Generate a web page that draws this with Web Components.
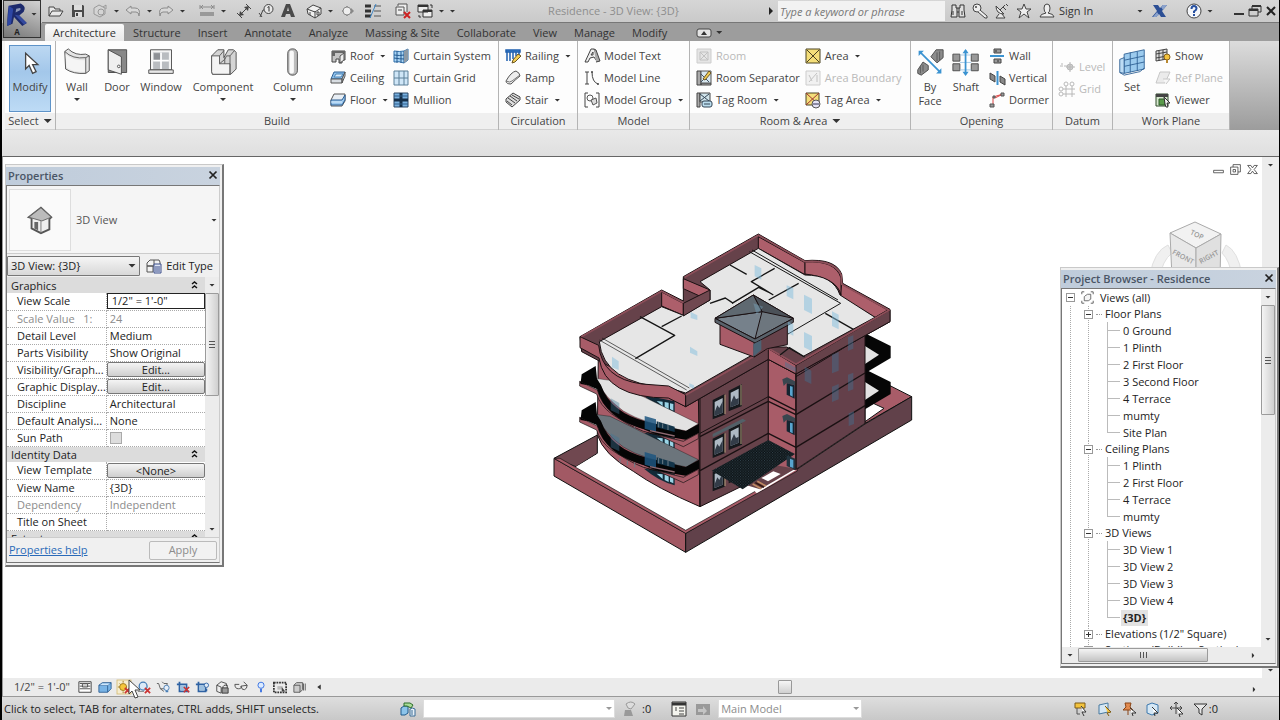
<!DOCTYPE html>
<html lang="en">
<head>
<meta charset="utf-8">
<meta name="viewport" content="width=device-width, initial-scale=1">
<title>Residence - 3D View: {3D}</title>
<style>
  html, body { height: 100%; }
  body {
    margin: 0;
    background: #000;
    color: #444;
    font: 11px/16px "Open Sans", "Noto Sans", sans-serif;
  }
</style>
</head>
<body>
<rv-app></rv-app>

<script>
const ICONS = {
  // quick access
  open: `<path d="M1 13V4h5l1 2h5v2M1 13l3-5h11l-3 5z" fill="#e8e8e8" stroke="#444"/>`,
  save: `<path d="M2 2h11l1 1v11H2z" fill="#4a4a4a"/><path d="M4 2h8v5H4zM5 9h7v5H5z" fill="#ddd"/><path d="M6 10h2v3H6z" fill="#444"/>`,
  sync: `<path d="M2 5l5-3 6 3v6l-5 3-6-3z" fill="#d4d4d4" stroke="#999"/><circle cx="9" cy="9" r="3" fill="none" stroke="#999"/><path d="M11 4l3-2v4" fill="none" stroke="#999"/>`,
  undo: `<path d="M6 3L1 7l5 4V9h5q3 0 3 4 2-8-4-8H6z" fill="#d8d8d8" stroke="#8c8c8c"/>`,
  redo: `<path d="M10 3l5 4-5 4V9H5q-3 0-3 4-2-8 4-8h4z" fill="#d8d8d8" stroke="#8c8c8c"/>`,
  measure: `<path d="M1 4h14M1 2v4M15 2v4M4 2L2 4l2 2M12 2l2 2-2 2" fill="none" stroke="#8c8c8c"/><path d="M1 9h14v4H1z" fill="#999"/>`,
  dim: `<path d="M3 13L13 3M1 10l5 5M10 1l5 5" stroke="#444"/><path d="M3 13l1-5 4 4zM13 3l-1 5-4-4z" fill="#444"/>`,
  tag: `<path d="M2 14l3-7h2M1 10l3 4" fill="none" stroke="#444"/><circle cx="10.500" cy="6" r="4.500" fill="#e8e8e8" stroke="#444"/><path d="M9.500 4.500l1.500-1v5" stroke="#333" fill="none"/>`,
  text: `<path d="M1 14L6 1h4l5 13h-4l-1-3H6l-1 3zM7 8h2L8 4z" fill="#4a4a4a" fill-rule="evenodd"/>`,
  house: `<path d="M1 6l6-4 8 3v6l-6 4-7-4z" fill="#f0f0f0" stroke="#444"/><path d="M9 8v7M1 6l8 3 6-4M4 9v3M11 9h2v3h-2z" fill="none" stroke="#444"/>`,
  section: `<path d="M3 8l5-5 5 5-5 5z" fill="#d8d8d8" stroke="#999"/><circle cx="8" cy="8" r="4" fill="#eee" stroke="#888"/><path d="M12 5l3 3-3 3z" fill="#888"/>`,
  thin: `<path d="M0 3h6M0 8h6M0 13h6" stroke="#333" stroke-width="3"/><path d="M9 3h7M9 8h7M9 13h7" stroke="#555"/><path d="M5 15L11 1" stroke="#3d86c6"/>`,
  hidden: `<path d="M3 3V1h9v8M1 4h8v8H1z" fill="#eee" stroke="#555"/><path d="M3 7h4" stroke="#444"/><path d="M9 9l6 6M15 9l-6 6" stroke="#c22" stroke-width="2"/>`,
  windows: `<path d="M1 2h10v7H1zM6 7h9v7H6z" fill="#eee" stroke="#333"/><path d="M1 3h10M6 8h9" stroke="#333" stroke-width="2"/><path d="M13 2h2v3M2 12v2h2" fill="none" stroke="#333"/>`,
  binoculars: `<path d="M2 7V2h4v3h4V2h4v5l1 7H9V9H7v5H1z" fill="#e0e0e0" stroke="#333"/><path d="M3 8v4M12 8v4M7 5v4M9 5v4" stroke="#333"/>`,
  key: `<circle cx="5" cy="5" r="4" fill="#eee" stroke="#444"/><circle cx="4" cy="4" r="1" fill="#444"/><path d="M8 7l7 6v2h-2L6 9" fill="#eee" stroke="#444"/>`,
  dish: `<path d="M2 3q0 8 8 8zM6 7l5-5M5 11l-3 4h9l-3-4" fill="#e8e8e8" stroke="#444"/><path d="M9 4l3 3M12 1l2 2" stroke="#444"/>`,
  star: `<path d="M8 1l2 5h5l-4 3 2 6-5-4-5 4 2-6-4-3h5z" fill="#eee" stroke="#444"/>`,
  person: `<path d="M5 5q0-4 3-4t3 4-2 5q6 1 6 4H1q0-3 6-4-2-1-2-5z" fill="#eee" stroke="#444"/>`,
  exchange: `<path d="M1 2h5l2 3 3-3h4l-5 6 4 6H9l-2-3-3 3H0l5-6z" fill="#2c4f95"/><path d="M9 4l2-2h4l-4 5zM5 9l2 3-3 2H1z" fill="#8aa2cc"/>`,
  help: `<circle cx="8" cy="8" r="7" fill="#f4f6fa" stroke="#444"/><path d="M5.500 6q0-3 2.500-3t2.500 2.500Q10.500 7 8 8.500V10M8 11v2" stroke="#2750a0" stroke-width="2" fill="none"/>`,
  minimize: `<path d="M3 11h10" stroke="#333" stroke-width="2"/>`,
  restore: `<path d="M5 6V3h9v6h-3M2 6h9v7H2z" fill="none" stroke="#333"/><path d="M5 3h9M2 7h9" stroke="#333" stroke-width="2"/>`,
  close: `<path d="M4 4l8 8M12 4l-8 8" stroke="#222" stroke-width="2"/>`,
  docMin: `<path d="M2 9h12v3H2z" fill="#fff" stroke="#444"/>`,
  docRestore: `<path d="M5 5V2h9v9h-3M2 5h9v9H2z" fill="#fff" stroke="#444"/><path d="M5 8h3v3H5z" fill="#fff" stroke="#444"/>`,
  closebox: `<path d="M2 3h4l2 3 2-3h4l-4 5 4 5h-4l-2-3-2 3H2l4-5z" fill="#fff" stroke="#444"/>`,
  ribbonToggle: `<rect x="1" y="4" width="14" height="8" rx="2" fill="#e4e4e4" stroke="#444"/><path d="M8 6l3 4H5z" fill="#333"/>`,

  // ribbon, small
  roof: `<path d="M2 3h13v9h-3v3H9v-4H6v3H2z" fill="#c4c4c4" stroke="#444"/><path d="M2 3h13v2H5v3H2z" fill="#666"/><path d="M10 8l4-3v7l-4 3z" fill="#eee" stroke="#555"/>`,
  ceiling: `<path d="M4 2h11l-3 7H1z" fill="#8cc0ec" stroke="#2d5f93"/><path d="M6 4h7l-2 3H4z" fill="#d9ecfb" stroke="#4a83b5"/><path d="M1 9h11v4H1zM12 9l3-7v4l-3 7z" fill="#d8dde2" stroke="#555"/>`,
  floor: `<path d="M4 2h11v7l-3 5H1V8z" fill="#e8eef4" stroke="#555"/><path d="M1 8h11l3-5v5l-3 5H1z" fill="#9cc8ee" stroke="#2d5f93"/><path d="M1 10h11" stroke="#d9ecfb"/>`,
  curtain: `<path d="M1 3q6 1 10 0l4-2v11l-4 3q-5-2-10-1z" fill="#a9d4f4" stroke="#2d6da8"/><path d="M1 7q6 1 10 0M1 10q6 1 10 1M4 3v12M8 4v11M11 3v12" stroke="#245b91" fill="none"/><path d="M11 3l4-2v11l-4 3z" fill="#8d99a4"/>`,
  grid: `<path d="M1 1h14v14H1z" fill="#cfe6f7" stroke="#5c8099"/><path d="M6 1v14M11 1v14M1 8h14" stroke="#5c8099"/>`,
  mullion: `<path d="M1 1h14v14H1z" fill="#78b0e0" stroke="#2a4765"/><path d="M8 1v14M1 8h14" stroke="#16304a" stroke-width="3"/><path d="M1 4h14M1 12h14" stroke="#2f5c87"/>`,
  railing: `<path d="M1 2h14v2H1zM2 4v9M5 4v9M8 4v7M11 4v4M14 4v3" stroke="#1e5fae" fill="#4a93de" stroke-width="1.500"/><path d="M8 12l5-6 3 2-6 6-3 1z" fill="#f3cf55" stroke="#6b5520"/>`,
  ramp: `<path d="M1 11q5-9 10-10 4 2 4 5-5 4-9 8-5 0-5-3z" fill="#eee" stroke="#555"/><path d="M1 11q4 2 6 0l8-6" stroke="#777" fill="none"/>`,
  stair: `<path d="M1 7l7-6 7 4v3l-8 7-6-5z" fill="#ddd" stroke="#444"/><path d="M3 6l7 5M5 4l7 5M7 3l7 4M2 9l5 4" stroke="#444"/>`,
  modelText: `<path d="M1 14L7 1h3l4 10-2 1-2-3-4 1-2 4zM7 7h2V4z" fill="#eee" stroke="#444" fill-rule="evenodd"/><path d="M10 1l2 1 4 11-4 1" fill="#aaa" stroke="#444"/>`,
  modelLine: `<path d="M1 2h4M3 2v12M1 14h4M8 2q0 10 6 12" fill="none" stroke="#444"/><circle cx="8" cy="2" r="1" fill="#444"/><circle cx="14" cy="14" r="1" fill="#444"/>`,
  modelGroup: `<path d="M4 1H1v14h3M12 1h3v14h-3" fill="none" stroke="#444"/><circle cx="6" cy="6" r="3" fill="none" stroke="#555"/><path d="M7 8l5-2 1 5-4 2z" fill="#ddd" stroke="#555"/>`,
  room: `<g opacity=".35"><path d="M1 1h14v14H1z" fill="#bbb" stroke="#777"/><path d="M4 4h8v8H4zM4 4l8 8M12 4l-8 8" fill="none" stroke="#555"/></g>`,
  roomSep: `<path d="M1 1h4v14H1zM5 13h10v2H5z" fill="#aaa" stroke="#444"/><path d="M5 1h10v12H5z" fill="#d8e8f0" stroke="#555"/><path d="M5 4l8 8M13 4l-8 8" stroke="#456"/><path d="M7 9l6-8 2 2-6 7z" fill="#f3cf55" stroke="#6b5520"/>`,
  tagRoom: `<path d="M1 1h3v14H1z" fill="#aaa" stroke="#444"/><path d="M4 1h10v9H4z" fill="#cfe3ea" stroke="#444"/><path d="M4 2l9 7M13 2L4 9" stroke="#345"/><rect x="6" y="9" width="10" height="6" rx="2" fill="#bde" stroke="#345"/><path d="M8 12h6" stroke="#345"/>`,
  area: `<path d="M1 1h14v14H1z" fill="#f4de79" stroke="#4a4222"/><path d="M2 2l12 12M14 2L2 14" stroke="#4a4222"/>`,
  areaBound: `<g opacity=".35"><path d="M1 1h14v14H1z" fill="#ddd" stroke="#777"/><path d="M4 12l8-9M4 5l3 6M12 5v7" stroke="#555"/></g>`,
  tagArea: `<path d="M1 1h13v12H1z" fill="#f4de79" stroke="#4a4222"/><path d="M1 1l13 12M14 1L1 13" stroke="#a03030"/><circle cx="11" cy="12" r="4" fill="#e4e2f4" stroke="#555"/><path d="M8 12h6" stroke="#335"/>`,
  wallOpen: `<path d="M5 1h7v4H5zM5 11h7v4H5z" fill="#999" stroke="#444"/><path d="M1 8h14" stroke="#3b93d1" stroke-width="2"/><path d="M7 2v2M9 12v2" stroke="#333"/>`,
  vertical: `<path d="M1 3l5 3v6l-5-3zM11 6l5 3v6l-5-3z" fill="#888" stroke="#444"/><path d="M8.500 1v14" stroke="#3b93d1" stroke-width="2"/>`,
  dormer: `<path d="M4 13V5l10-3-8 4" fill="none" stroke="#d44"/><path d="M1 12h4v3H1zM12 1h3v3h-3zM4 4h2v2H4z" fill="#999" stroke="#555"/>`,
  level: `<g opacity=".4"><path d="M1 7h3M5 7h3M3 4v2" stroke="#555"/><circle cx="11" cy="8" r="3" fill="#888" stroke="#555"/><path d="M11 3v10M7 8h9" stroke="#555"/></g>`,
  gridDatum: `<g opacity=".4" fill="none" stroke="#555"><circle cx="7" cy="3" r="2"/><circle cx="13" cy="3" r="2"/><circle cx="2" cy="8" r="2"/><circle cx="2" cy="13" r="2"/><path d="M7 5v11M13 5v11M4 8h12M4 13h12"/></g>`,
  show: `<path d="M1 3l11-2v10L1 13z" fill="#ddd" stroke="#444"/><path d="M4 3v10M8 2v10M1 6l11-2M1 10l11-2" stroke="#444"/><circle cx="12" cy="9" r="3" fill="#f3c33c" stroke="#86601a"/><path d="M11 12h2v3h-2z" fill="#b88830"/>`,
  refPlane: `<g opacity=".35"><path d="M5 2h10l-5 11H1z" fill="#ccc" stroke="#666"/><path d="M8 9h7l-4 5" fill="#eee" stroke="#666"/></g>`,
  viewer: `<path d="M1 2h12v12H1z" fill="#d7e8cf" stroke="#2f4a2a"/><path d="M1 2h12v3H1z" fill="#444"/><path d="M4 7h6v6H4z" fill="#5a9a4b" stroke="#2f5a2a"/><path d="M9 5l6 6-3 0 1 4-2 0-1-3z" fill="#eee" stroke="#333"/>`,
  editType: `<path d="M1 5l3-3h4v6H1zM8 2h5l1 2v4M1 8h6v6H1z" fill="#f3f3f3" stroke="#555"/><path d="M8 6h7v9H8z" fill="#dfe6f6" stroke="#3c4f8a"/><path d="M9 9h5M9 11h5M9 13h5" stroke="#3c4f8a"/>`,
  views: `<path d="M1 4V1h3M12 1h3v3M15 12v3h-3M4 15H1v-3" fill="none" stroke="#444"/><path d="M5 6l3-2h4v6l-3 2H4V7z" fill="#f4f4f4" stroke="#555"/>`,

  // view control bar
  detail: `<path d="M1 2h14v12H1z" fill="#fff" stroke="#333"/><path d="M2 4h3M2 7h3M11 4h3M11 7h3M2 10h12M5 4h6v4H5z" stroke="#444" fill="#ccc"/>`,
  style: `<path d="M1 6l4-3h10v7l-4 4H1z" fill="#79b4e6" stroke="#2d5f93"/><path d="M1 6h10v8M11 6l4-3" fill="none" stroke="#2d5f93"/><path d="M2 6l3-2h9l-3 2z" fill="#cfe6fa"/>`,
  sun: `<rect x="0" y="0" width="16" height="16" fill="#f6edcf" stroke="#d5bd77"/><circle cx="7" cy="8" r="4" fill="#f6c63a" stroke="#9a7218"/><path d="M7 1v2M1 8h2M3 4l1 1M7 13v2" stroke="#9a7218"/><path d="M9 9l6 6M15 9l-6 6" stroke="#c33" stroke-width="2"/>`,
  shadow: `<circle cx="7" cy="7" r="4.500" fill="#dbe9f7" stroke="#467db5" stroke-width="1.500"/><path d="M1 13h7" stroke="#777"/><path d="M9 9l6 6M15 9l-6 6" stroke="#c33" stroke-width="2"/>`,
  render: `<path d="M1 4h2l2 6h6l2-6H9L7 2M5 10l4 3" fill="none" stroke="#555"/><circle cx="12" cy="9" r="3" fill="#e6eef8" stroke="#467db5"/><path d="M11 13h3" stroke="#467db5" stroke-width="2"/>`,
  crop: `<path d="M4 2v11h11M1 5h11v9" fill="none" stroke="#2e62a3" stroke-width="2"/><path d="M5 6h6v6H5z" fill="#9cc0e0"/><path d="M9 8l6 6M15 8l-6 6" stroke="#c33" stroke-width="2"/>`,
  cropShow: `<path d="M4 2v11h8M1 5h11v9" fill="none" stroke="#2e62a3" stroke-width="2"/><path d="M5 6h6v6H5z" fill="#9cc0e0"/><circle cx="13" cy="6" r="2.500" fill="#dfeaf6" stroke="#2e62a3"/><path d="M12 10h2v3h-2z" fill="#2e62a3"/>`,
  lock: `<path d="M2 6l5-4 6 2v3M2 6v7l5 2M2 6l5 2v7" fill="#eee" stroke="#444"/><path d="M8 9h7v6H8z" fill="#999" stroke="#333"/><path d="M9 9q0-4 5-3v3" fill="none" stroke="#333"/>`,
  glasses: `<path d="M1 5q0 5 4 5t3-3q1 5 4 4t3-5l-4-4M1 5l5 0M8 7l7-1" fill="none" stroke="#444"/>`,
  bulb: `<circle cx="8" cy="6" r="3.500" fill="#dcebff" stroke="#2e6ae0"/><path d="M7 10h2v4H7z" fill="#2e6ae0"/>`,
  temp: `<path d="M1 3h14v11H1z" fill="none" stroke="#333" stroke-width="2" stroke-dasharray="2 1"/><path d="M5 7h6v4H5z" fill="#bbb"/><path d="M10 8l4 5-4 0z" fill="#444"/>`,
  analytic: `<path d="M1 6l3-3h7v8l-3 3H1z" fill="#ccc" stroke="#555"/><path d="M1 6h7v8M12 4v8M14 4v8" fill="none" stroke="#555"/>`,
  left: `<path d="M10 5v6L6 8z" fill="#333"/>`,

  // status bar
  workset: `<path d="M1 7l3-2h4v7l-3 2H1z" fill="#8cc4ea" stroke="#1f5a8c"/><path d="M4 5V2h6l3 2-2 3-4-2z" fill="#a9dc98" stroke="#2d6d2a"/><path d="M10 8q2-2 5 0v7h-5zM12 9v5" fill="#e7f0f7" stroke="#3a6c96"/>`,
  filterGray: `<path d="M4 3q5-4 9 0l-4 5-3-1z" fill="#ddd" stroke="#999"/><path d="M3 9h6l2 6H2z" fill="#999"/>`,
  options: `<path d="M1 1h14v14H1z" fill="#f4f4ee" stroke="#333"/><path d="M1 3h14" stroke="#333" stroke-width="3"/><path d="M4 7h2M4 9h2M8 7h5M8 10h5M8 13h5" stroke="#444" fill="none"/>`,
  optionAdd: `<path d="M1 3h14v11H1z" fill="#999"/><path d="M3 8h5v-3l4 5-4 4v-3H3z" fill="#c4c4c4"/>`,
  selLink: `<path d="M2 2h10v5H2z" fill="#f3c33c" stroke="#7c5b16"/><path d="M8 5l5 6H9l2 4" fill="#fff" stroke="#333"/><path d="M4 7v6h3" stroke="#555" fill="none"/>`,
  selUnder: `<path d="M2 13V4l9-2v9z" fill="#d5e7f4" stroke="#47799f"/><path d="M8 5l6 6-4 1 2 3" fill="#f3c33c" stroke="#7c5b16"/>`,
  selPin: `<path d="M4 2h6l-1 4 3 3H2l3-3zM7 9v5" fill="#e28a4e" stroke="#8a4416"/><path d="M9 7l6 5-4 0 1 3" fill="#fff" stroke="#333"/>`,
  selFace: `<path d="M2 4l5-2 6 2v8l-6 2-5-2z" fill="#d5e7f4" stroke="#3c78ae"/><path d="M7 6l6 6-4 0 1 3" fill="#fff" stroke="#333"/>`,
  drag: `<path d="M7 1v12M1 7h12M5 3l2-2 2 2M3 5L1 7l2 2M11 5l2 2-2 2" stroke="#444" fill="none"/><path d="M8 7l6 6-4 0 1 3" fill="#fff" stroke="#333"/>`,
  filter: `<path d="M1 3h13L9 8v6l-3-2V8z" fill="#e8e8e8" stroke="#333"/>`,

  // ribbon, large (32 x 32 grid)
  modify: `<path d="M11 6v18l4-4 4 9 4-2-4-8h6z" fill="#fff" stroke="#444" stroke-width="1.500"/>`,
  wall: `<path d="M2 4l4-3q8 8 20 6l4 2v17l-4 3Q12 30 3 24z" fill="#e4e4e4" stroke="#444"/><path d="M2 4q9 9 24 7l4-2M26 11v18" fill="none" stroke="#555"/><path d="M3 7q9 8 22 7v13Q11 28 4 22z" fill="#f5f5f5"/>`,
  door: `<path d="M6 2h21v26H6z" fill="#888" stroke="#444"/><path d="M6 2l15 8v20L6 25z" fill="#efefef" stroke="#444"/><circle cx="18" cy="21" r="1.500" fill="#fff" stroke="#444"/>`,
  window: `<path d="M4 2h24v23H4z" fill="#f4f4f4" stroke="#444"/><path d="M7 5h18v19H7z" fill="#b9bcc0"/><path d="M8 6h8v8H8z" fill="#8e9196"/><path d="M16 5v19M7 14.500h18" stroke="#fff" stroke-width="2"/><path d="M2 25h28v4H2z" fill="#e8e8e8" stroke="#444"/>`,
  component: `<path d="M3 9l7-7h7v9l5-9h6l3 3v19l-6 6H4l-1-3z" fill="#d4d4d4" stroke="#444"/><path d="M3 9h9v9h12v12H4l-1-3z" fill="#f4f4f4" stroke="#555"/><path d="M12 9l5-6M12 18l6-5M18 13v-2M24 30V9l5-6M24 9h-4l-2 4v5" fill="none" stroke="#555"/>`,
  column: `<rect x="10" y="1" width="11" height="30" rx="5" fill="#bdbdbd" stroke="#444"/><rect x="12" y="3" width="5" height="26" rx="2" fill="#fafafa"/>`,
  byFace: `<path d="M17 10l6-8h8v9l-7 6zM2 25l6-9 6 4v5l-8 6-4-2z" fill="#8c8c8c" stroke="#444"/><path d="M24 5v10M27 4v10M5 21v8M8 19v8" stroke="#555"/><path d="M5 5l22 22" stroke="#3b93d1" stroke-width="2"/><path d="M3 3h6l-6 6zM29 29h-6l6-6z" fill="#3b93d1"/>`,
  shaft: `<path d="M1 7h8v8H1zM22 7h8v8h-8zM1 18h8v8H1zM22 18h8v8h-8z" fill="#999" stroke="#444"/><path d="M9 16.500h13M9 8h13M9 25h13" stroke="#9ec5e2"/><path d="M15.500 3v27" stroke="#3b93d1" stroke-width="2"/><path d="M12 6l3.500-5L19 6zM12 27l3.500 5 3.500-5z" fill="#3b93d1"/>`,
  set: `<path d="M7 7l23-5v22L7 29z" fill="#9ccbee" stroke="#2d5f93"/><path d="M14 5v23M22 4v22M7 14l23-5M7 21l23-5" stroke="#2d5f93"/><path d="M2 13l5-2v18l-5-1z" fill="#bddcf4" stroke="#2d5f93"/><path d="M2 28l5 3 18-4 5-4" fill="none" stroke="#2d5f93"/>`,
  homeView: `<path d="M4 13L17 3l11 10-2 2v11l-9 4L7 25V14z" fill="#eee" stroke="#555" stroke-width="2"/><path d="M4 13L17 3l11 10-10 4z" fill="#bbb" stroke="#666"/><path d="M17 17v13" stroke="#777"/><path d="M10 18h4v9l-4-2z" fill="#666"/>`,
  logo: `<path d="M5 5l16-3q8 4 4 11l-6 5 10 10-6 4-11-12-2 9-7 3q0-16 2-27z" fill="#1c2a6c"/><path d="M15 9l5-1q2 1 0 3l-6 3z" fill="#8c98b8"/><path d="M5 5l6 4-3 20-5 3z" fill="#2d46a4"/><path d="M13 17l6 1 10 10-4 2z" fill="#33499e"/>`
};

const BIG = ["modify", "wall", "door", "window", "component", "column", "byFace", "shaft", "set", "homeView", "logo"];

const BASE = `
  *, *::before, *::after { box-sizing: border-box; }
  button, input, select { font: inherit; color: inherit; }
  button { margin: 0; padding: 0; border: 0; background: none; }
  .caret {
    display: inline-block;
    flex: none;
    width: 6px;
    height: 3px;
    background: #333;
    clip-path: polygon(0 0, 100% 0, 50% 100%);
  }
`;

class RvElement extends HTMLElement {
  constructor() {
    super();
    this.attachShadow({ mode: "open" });
  }

  getStyles() {
    return "";
  }

  getMarkup() {
    return "<slot></slot>";
  }

  connectedCallback() {
    if (this.shadowRoot.childNodes.length) return;
    const template = document.createElement("template");
    template.innerHTML = `<style>${BASE}${this.getStyles()}</style>${this.getMarkup()}`;
    this.shadowRoot.appendChild(template.content.cloneNode(true));
  }
}

class RvIcon extends RvElement {
  getStyles() {
    return `
      :host { display: inline-block; flex: none; width: var(--icon, 16px); height: var(--icon, 16px); }
      svg { display: block; width: 100%; height: 100%; overflow: visible; }
    `;
  }

  getMarkup() {
    const name = this.getAttribute("name");
    const box = BIG.includes(name) ? 32 : 16;
    return `<svg viewBox="0 0 ${box} ${box}" aria-hidden="true">${ICONS[name] || ""}</svg>`;
  }
}
customElements.define("rv-icon", RvIcon);

/* ---------- header: quick access, search, tabs ---------- */

class RvHeader extends RvElement {
  getStyles() {
    return `
      :host {
        display: grid;
        grid-template: 23px 18px / 40px 1fr;
        background: linear-gradient(#d6d6d6, #c9c9c9 23px, #9d9d9d 23px);
      }
      .app {
        grid-row: 1 / 3;
        display: grid;
        grid-template: 26px 9px / 26px 8px;
        place-items: center;
        align-self: start;
        width: 38px;
        height: 38px;
        margin-left: 1px;
        border: 1px solid #333;
        background: linear-gradient(200deg, #d2d2d2, #777);
        --icon: 24px;
      }
      .app small { font-size: 8px; line-height: 8px; font-weight: 700; color: #222; }
      .bar { display: flex; align-items: center; border-bottom: 1px solid #777; min-width: 0; }
      .tools { display: flex; align-items: center; padding-left: 3px; }
      .tools button, .help button { display: flex; justify-content: center; width: 22px; }
      .tools .drop { width: 11px; }
      .gap { width: 4px; }
      .gap.wide { width: 8px; }
      h1 { flex: 1; margin: 0; font-size: 11px; font-weight: 400; color: #8e8e8e; text-align: center; }
      .search { display: flex; align-items: center; gap: 5px; flex: none; }
      .search .arrow { width: 4px; height: 8px; background: #222; clip-path: polygon(0 0, 100% 50%, 0 100%); }
      .search input {
        width: 167px;
        height: 20px;
        padding: 0 2px;
        border: 0;
        background: #f2f2f2;
        font-style: italic;
      }
      .search input::placeholder { color: #777; opacity: 1; }
      .help { display: flex; align-items: center; flex: none; padding-left: 2px; }
      .help .sign { justify-content: flex-start; gap: 4px; width: 100px; padding-left: 4px; color: #333; }
      .help .drop { width: 10px; }
      .help .win { width: 16px; }
      nav { display: flex; align-items: flex-end; gap: 1px; padding-left: 3px; color: #333; }
      nav button { height: 17px; padding: 0 8px; line-height: 16px; }
      nav button[aria-selected="true"] { background: linear-gradient(#fafafa, #e9e9e9); border-radius: 2px 2px 0 0; }
      nav .toggle { display: flex; align-items: center; gap: 4px; padding: 0 20px; }
    `;
  }

  getMarkup() {
    const tool = (name, label) => `<button aria-label="${label}"><rv-icon name="${name}"></rv-icon></button>`;
    const drop = `<button class="drop" aria-label="More"><span class="caret"></span></button>`;
    const gap = `<span class="gap"></span>`;
    const wide = `<span class="gap wide"></span>`;
    const tabs = ["Architecture", "Structure", "Insert", "Annotate", "Analyze", "Massing &amp; Site",
      "Collaborate", "View", "Manage", "Modify"];
    return `
      <button class="app" aria-label="Application menu">
        <rv-icon name="logo"></rv-icon><span class="caret"></span><small>A</small>
      </button>
      <div class="bar">
        <div class="tools">
          ${tool("open", "Open")}${tool("save", "Save")}${tool("sync", "Synchronize")}${drop}
          ${tool("undo", "Undo")}${drop}${tool("redo", "Redo")}${drop}${wide}
          ${tool("measure", "Measure")}${drop}${gap}${tool("dim", "Aligned dimension")}${tool("tag", "Tag")}
          ${tool("text", "Text")}${gap}${tool("house", "Default 3D view")}${drop}${tool("section", "Section")}
          ${gap}${tool("thin", "Thin lines")}${wide}${tool("hidden", "Close hidden windows")}
          ${tool("windows", "Switch windows")}${drop}${drop}
        </div>
        <h1>Residence - 3D View: {3D}</h1>
        <div class="search">
          <span class="arrow"></span>
          <input type="search" aria-label="Search" placeholder="Type a keyword or phrase">
        </div>
        <div class="help">
          ${tool("binoculars", "Find")}${tool("key", "Subscription")}${tool("dish", "Communication")}${tool("star", "Favorites")}
          <button class="sign"><rv-icon name="person"></rv-icon>Sign In</button>
          ${drop}${gap}${tool("exchange", "Exchange apps")}${wide}${gap}${tool("help", "Help")}${drop}
          ${wide}${wide}
          <button class="win" aria-label="Minimize"><rv-icon name="minimize"></rv-icon></button>
          <button class="win" aria-label="Restore"><rv-icon name="restore"></rv-icon></button>
          <button class="win" aria-label="Close"><rv-icon name="close"></rv-icon></button>
        </div>
      </div>
      <nav role="tablist">
        ${tabs.map((t, i) => `<button role="tab" aria-selected="${i === 0}">${t}</button>`).join("")}
        <button class="toggle" aria-label="Minimize ribbon"><rv-icon name="ribbonToggle"></rv-icon><span class="caret"></span></button>
      </nav>
    `;
  }
}
customElements.define("rv-header", RvHeader);

/* ---------- ribbon ---------- */

class RvBigButton extends RvElement {
  getStyles() {
    return `
      :host { display: block; }
      button {
        display: flex;
        flex-direction: column;
        align-items: center;
        gap: 4px;
        width: 100%;
        height: 67px;
        padding-top: 2px;
        border: 1px solid transparent;
        line-height: 14px;
        --icon: 28px;
      }
      :host([active]) button { border-color: #5e93c8; background: linear-gradient(#bcd8f2, #a3c7ea 40%, #bddbf5); }
    `;
  }

  getMarkup() {
    return `
      <button>
        <rv-icon name="${this.getAttribute("icon")}"></rv-icon>
        <span class="label"><slot></slot></span>
        ${this.hasAttribute("drop") ? `<span class="caret"></span>` : ""}
      </button>
    `;
  }
}
customElements.define("rv-big-button", RvBigButton);

class RvTool extends RvElement {
  getStyles() {
    return `
      :host { display: block; }
      button { display: flex; align-items: center; gap: 4px; height: 22px; white-space: nowrap; }
      .caret { margin-left: 2px; }
      :host([disabled]) { color: #b9b9b9; }
    `;
  }

  getMarkup() {
    return `
      <button ${this.hasAttribute("disabled") ? "disabled" : ""}>
        <rv-icon name="${this.getAttribute("icon")}"></rv-icon>
        <slot></slot>
        ${this.hasAttribute("drop") ? `<span class="caret"></span>` : ""}
      </button>
    `;
  }
}
customElements.define("rv-tool", RvTool);

class RvPanel extends RvElement {
  getStyles() {
    return `
      :host {
        display: grid;
        grid-template-rows: 1fr 17px;
        min-width: 0;
        border-right: 1px solid #b4b4b4;
        background: #fdfdfd;
      }
      .tools { display: flex; min-width: 0; padding: 4px 1px 0; }
      footer {
        display: flex;
        align-items: center;
        justify-content: center;
        gap: 5px;
        background: #efefef;
        border-bottom: 1px solid #d2d2d2;
      }
      footer .caret { width: 8px; height: 4px; }
    `;
  }

  getMarkup() {
    return `
      <div class="tools"><slot></slot></div>
      <footer>${this.getAttribute("label")}${this.hasAttribute("drop") ? `<span class="caret"></span>` : ""}</footer>
    `;
  }
}
customElements.define("rv-panel", RvPanel);

class RvRibbon extends RvElement {
  getStyles() {
    return `
      :host {
        display: grid;
        grid-template-columns: 51fr 443fr 79fr 112fr 221fr 142fr 60fr 117fr 49fr;
        height: 89px;
        padding-left: 3px;
        background: #f4f4f4;
      }
      .fill { background: linear-gradient(#dcdcdc, #9c9c9c); }
      .col { display: flex; flex-direction: column; padding-left: 5px; }
      .col.mid { justify-content: center; padding-bottom: 3px; }
      .w36 { width: 36px; }
      .w40 { width: 40px; }
      .w48 { width: 48px; }
      .w64 { width: 64px; }
      .w76 { width: 76px; }
      rv-big-button { flex: none; }
      [label="Select"] rv-big-button { width: 42px; margin: 0 3px; }
    `;
  }

  getMarkup() {
    return `
      <rv-panel label="Select" drop>
        <rv-big-button icon="modify" active>Modify</rv-big-button>
      </rv-panel>
      <rv-panel label="Build">
        <rv-big-button class="w40" icon="wall" drop>Wall</rv-big-button>
        <rv-big-button class="w40" icon="door">Door</rv-big-button>
        <rv-big-button class="w48" icon="window">Window</rv-big-button>
        <rv-big-button class="w76" icon="component" drop>Component</rv-big-button>
        <rv-big-button class="w64" icon="column" drop>Column</rv-big-button>
        <div class="col">
          <rv-tool icon="roof" drop>Roof</rv-tool>
          <rv-tool icon="ceiling">Ceiling</rv-tool>
          <rv-tool icon="floor" drop>Floor</rv-tool>
        </div>
        <div class="col">
          <rv-tool icon="curtain">Curtain System</rv-tool>
          <rv-tool icon="grid">Curtain Grid</rv-tool>
          <rv-tool icon="mullion">Mullion</rv-tool>
        </div>
      </rv-panel>
      <rv-panel label="Circulation">
        <div class="col">
          <rv-tool icon="railing" drop>Railing</rv-tool>
          <rv-tool icon="ramp">Ramp</rv-tool>
          <rv-tool icon="stair" drop>Stair</rv-tool>
        </div>
      </rv-panel>
      <rv-panel label="Model">
        <div class="col">
          <rv-tool icon="modelText">Model Text</rv-tool>
          <rv-tool icon="modelLine">Model Line</rv-tool>
          <rv-tool icon="modelGroup" drop>Model Group</rv-tool>
        </div>
      </rv-panel>
      <rv-panel label="Room &amp; Area" drop>
        <div class="col">
          <rv-tool icon="room" disabled>Room</rv-tool>
          <rv-tool icon="roomSep">Room Separator</rv-tool>
          <rv-tool icon="tagRoom" drop>Tag Room</rv-tool>
        </div>
        <div class="col">
          <rv-tool icon="area" drop>Area</rv-tool>
          <rv-tool icon="areaBound" disabled>Area Boundary</rv-tool>
          <rv-tool icon="tagArea" drop>Tag Area</rv-tool>
        </div>
      </rv-panel>
      <rv-panel label="Opening">
        <rv-big-button class="w36" icon="byFace">By<br>Face</rv-big-button>
        <rv-big-button class="w36" icon="shaft">Shaft</rv-big-button>
        <div class="col">
          <rv-tool icon="wallOpen">Wall</rv-tool>
          <rv-tool icon="vertical">Vertical</rv-tool>
          <rv-tool icon="dormer">Dormer</rv-tool>
        </div>
      </rv-panel>
      <rv-panel label="Datum">
        <div class="col mid">
          <rv-tool icon="level" disabled>Level</rv-tool>
          <rv-tool icon="gridDatum" disabled>Grid</rv-tool>
        </div>
      </rv-panel>
      <rv-panel label="Work Plane">
        <rv-big-button class="w36" icon="set">Set</rv-big-button>
        <div class="col">
          <rv-tool icon="show">Show</rv-tool>
          <rv-tool icon="refPlane" disabled>Ref Plane</rv-tool>
          <rv-tool icon="viewer">Viewer</rv-tool>
        </div>
      </rv-panel>
      <div class="fill"></div>
    `;
  }
}
customElements.define("rv-ribbon", RvRibbon);

/* ---------- shared palette parts ---------- */

class RvScrollbar extends RvElement {
  getStyles() {
    return `
      :host { display: flex; flex-direction: column; align-items: center; width: 14px; background: #ececec; }
      .end { display: grid; place-items: center; flex: none; width: 100%; height: 16px; }
      .end:first-child .caret { transform: rotate(180deg); }
      .track { flex: 1; width: 100%; min-height: 0; }
      .thumb {
        display: grid;
        place-items: center;
        width: 100%;
        height: var(--thumb, 0);
        border: 1px solid #9b9b9b;
        border-radius: 1px;
        background: linear-gradient(90deg, #f4f4f4, #cfcfcf);
      }
      .thumb::after { content: ""; width: 6px; height: 7px; background: repeating-linear-gradient(#555 0 1px, transparent 1px 3px); }
      :host([plain]) .thumb { display: none; }
      :host([horizontal]) { flex-direction: row; width: auto; height: 16px; }
      :host([horizontal]) .end { width: 16px; }
      :host([horizontal]) .end:first-child .caret { transform: rotate(90deg); }
      :host([horizontal]) .end:last-child .caret { transform: rotate(-90deg); }
      :host([horizontal]) .track { height: 100%; }
      :host([horizontal]) .thumb { width: var(--thumb); height: 14px; margin-top: 1px; background: linear-gradient(#f4f4f4, #c4c4c4); }
      :host([horizontal]) .thumb::after { width: 7px; height: 6px; background: repeating-linear-gradient(90deg, #555 0 1px, transparent 1px 3px); }
    `;
  }

  getMarkup() {
    return `
      <span class="end"><span class="caret"></span></span>
      <span class="track"><span class="thumb"></span></span>
      <span class="end"><span class="caret"></span></span>
    `;
  }
}
customElements.define("rv-scrollbar", RvScrollbar);

class RvPalette extends RvElement {
  getStyles() {
    return `
      :host {
        display: flex;
        flex-direction: column;
        padding: 2px var(--edge, 2px) 2px 0;
        border: 1px solid #c9c9c9;
        border-right: 2px solid #777;
        border-bottom: 2px solid #777;
        background: #f0f0f0;
      }
      header {
        display: flex;
        align-items: center;
        justify-content: space-between;
        flex: none;
        height: 18px;
        padding-left: 2px;
        background: linear-gradient(90deg, #bfccdb, #c9d3df);
        color: #4a5566;
        font-weight: 600;
      }
      header button { width: 14px; height: 16px; --icon: 14px; }
      .body { display: flex; flex-direction: column; flex: 1; min-height: 0; border: 1px solid #777; border-right-color: #ccc; }
    `;
  }

  getMarkup() {
    return `
      <header>${this.getAttribute("label")}<button aria-label="Close"><rv-icon name="close"></rv-icon></button></header>
      <div class="body"><slot></slot></div>
    `;
  }
}
customElements.define("rv-palette", RvPalette);

/* ---------- properties ---------- */

class RvProperties extends RvElement {
  getStyles() {
    return `
      :host { display: flex; flex-direction: column; flex: 1; min-height: 0; color: #222; }
      .type { display: flex; align-items: center; height: 68px; padding: 3px 2px 2px; border-bottom: 1px solid #ccc; background: #f5f5f5; }
      .preview { display: grid; place-items: center; width: 62px; height: 62px; border: 1px solid #ddd; background: #fafafa; --icon: 30px; }
      .type span:nth-child(2) { flex: 1; padding-left: 5px; color: #555; }
      .pick { display: flex; align-items: center; justify-content: space-between; height: 23px; }
      .combo { display: grid; align-items: center; width: 133px; }
      .combo > * { grid-area: 1 / 1; }
      .combo .caret { justify-self: end; margin-right: 4px; width: 8px; height: 4px; }
      select { appearance: none; height: 20px; padding: 0 3px; border: 1px solid #777; border-radius: 1px; background: linear-gradient(#f5f5f5, #d8d8d8); }
      .edit { display: flex; align-items: center; gap: 4px; padding-right: 6px; }
      .rows { display: flex; flex: 1; min-height: 0; overflow: hidden; }
      table { flex: 1; align-self: flex-start; table-layout: fixed; border-collapse: collapse; background: #fff; }
      th, td { height: 17px; padding: 0; font-weight: 400; text-align: left; line-height: 16px; white-space: nowrap; overflow: hidden; text-overflow: ellipsis; border-bottom: 1px dotted #aaa; }
      tbody th { padding-left: 10px; width: 50%; border-right: 1px dotted #aaa; }
      td { padding-left: 3px; }
      .group th { height: 16px; line-height: 15px; padding-left: 4px; border: 0; background: #dcdcdc; }
      .group div { display: flex; justify-content: space-between; align-items: center; padding-right: 7px; }
      .chevron { width: 7px; height: 8px; stroke: #111; stroke-width: 1.500; fill: none; }
      .dim { color: #8c8c8c; }
      td input[type="text"] { width: 100%; height: 16px; padding: 0 4px; border: 1px solid #222; background: #fff; display: block; }
      td:has(input[type="text"]), td:has(button) { padding: 0; }
      td button { display: block; width: 100%; height: 15px; line-height: 13px; border: 1px solid #777; border-radius: 2px; background: linear-gradient(#f4f4f4, #cfcfcf); }
      td input[type="checkbox"] { appearance: none; display: block; width: 12px; height: 12px; margin: 0; border: 1px solid #aaa; background: #ddd; }
      rv-scrollbar { --thumb: 103px; }
      footer { display: flex; align-items: center; justify-content: space-between; height: 25px; padding: 0 2px; border-top: 1px solid #ccc; }
      a { color: #2a6ab8; }
      footer button { width: 68px; height: 19px; border: 1px solid #bbb; border-radius: 2px; background: #f2f2f2; color: #8c8c8c; }
    `;
  }

  getMarkup() {
    const chevron = `<svg class="chevron" viewBox="0 0 7 8"><path d="M1 3l2.500-2L6 3M1 7l2.500-2L6 7"/></svg>`;
    const group = (name) => `<tr class="group"><th colspan="2"><div>${name}${chevron}</div></th></tr>`;
    const row = (name, value, cls = "") => `<tr class="${cls}"><th scope="row">${name}</th><td>${value}</td></tr>`;
    return `
      <div class="type">
        <span class="preview"><rv-icon name="homeView"></rv-icon></span>
        <span>3D View</span>
        <span class="caret"></span>
      </div>
      <div class="pick">
        <div class="combo">
          <select aria-label="Instance"><option>3D View: {3D}</option></select>
          <span class="caret"></span>
        </div>
        <button class="edit"><rv-icon name="editType"></rv-icon>Edit Type</button>
      </div>
      <div class="rows">
        <table>
          <tbody>
            ${group("Graphics")}
            ${row("View Scale", `<input type="text" aria-label="View Scale" value="1/2&quot; = 1'-0&quot;">`)}
            ${row("Scale Value &nbsp; 1:", "24", "dim")}
            ${row("Detail Level", "Medium")}
            ${row("Parts Visibility", "Show Original")}
            ${row("Visibility/Graph...", "<button>Edit...</button>")}
            ${row("Graphic Display...", "<button>Edit...</button>")}
            ${row("Discipline", "Architectural")}
            ${row("Default Analysi...", "None")}
            ${row("Sun Path", `<input type="checkbox" aria-label="Sun Path">`)}
            ${group("Identity Data")}
            ${row("View Template", "<button>&lt;None&gt;</button>")}
            ${row("View Name", "{3D}")}
            ${row("Dependency", "Independent", "dim")}
            ${row("Title on Sheet", "")}
            ${group("Extents")}
          </tbody>
        </table>
        <rv-scrollbar></rv-scrollbar>
      </div>
      <footer><a href="#help">Properties help</a><button disabled>Apply</button></footer>
    `;
  }
}
customElements.define("rv-properties", RvProperties);

/* ---------- project browser ---------- */

class RvBrowser extends RvElement {
  getStyles() {
    return `
      :host { display: flex; flex-direction: column; flex: 1; min-height: 0; background: #fff; color: #222; }
      .view { display: flex; flex: 1; min-height: 0; overflow: hidden; }
      ul { margin: 0; padding: 0; list-style: none; }
      .tree { flex: 1; min-width: 0; white-space: nowrap; }
      .root { display: flex; align-items: center; gap: 6px; height: 17px; padding-left: 4px; --icon: 13px; }
      .groups { margin-left: 8px; background: repeating-linear-gradient(#aaa 0 1px, #fff 1px 2px) 0 0 / 1px 100% no-repeat; }
      .groups > li { background: repeating-linear-gradient(#aaa 0 1px, #fff 1px 2px) 18px 0 / 1px 100% no-repeat; }
      .group { display: flex; align-items: center; height: 16px; padding-left: 14px; }
      .group::after { order: 1; content: ""; width: 6px; margin: 0 3px; border-top: 1px dotted #999; }
      .group span { order: 2; }
      .box {
        flex: none;
        width: 9px;
        height: 9px;
        border: 1px solid #999;
        background: linear-gradient(#333, #333) center / 5px 1px no-repeat #fff;
      }
      .box.plus { background: linear-gradient(#333, #333) center / 5px 1px no-repeat, linear-gradient(#333, #333) center / 1px 5px no-repeat #fff; }
      .leaves { margin-left: 37px; background: linear-gradient(#bbb, #bbb) 0 0 / 1px calc(100% - 8px) no-repeat; }
      .leaves li { display: flex; align-items: center; gap: 1px; height: 17px; }
      .leaves li::before { content: ""; width: 13px; border-top: 1px solid #bbb; }
      .leaves span { padding: 0 2px; line-height: 16px; }
      .leaves .current { background: #e2e2e2; font-weight: 700; }
      .view rv-scrollbar { --thumb: 110px; }
      rv-scrollbar[horizontal] { --thumb: 130px; flex: none; margin-right: 14px; }
      .foot { background: #ececec; }
    `;
  }

  getMarkup() {
    const group = (name, leaves = []) => `
      <li>
        <div class="group"><i class="box ${leaves.length ? "" : "plus"}"></i><span>${name}</span></div>
        <ul class="leaves">${leaves.map((l) => `<li><span class="${l === "{3D}" ? "current" : ""}">${l}</span></li>`).join("")}</ul>
      </li>`;
    return `
      <div class="view">
        <div class="tree">
          <div class="root"><i class="box"></i><rv-icon name="views"></rv-icon>Views (all)</div>
          <ul class="groups">
            ${group("Floor Plans", ["0 Ground", "1 Plinth", "2 First Floor", "3 Second Floor", "4 Terrace", "mumty", "Site Plan"])}
            ${group("Ceiling Plans", ["1 Plinth", "2 First Floor", "4 Terrace", "mumty"])}
            ${group("3D Views", ["3D View 1", "3D View 2", "3D View 3", "3D View 4", "{3D}"])}
            ${group("Elevations (1/2\" Square)")}
            ${group("Sections (Building Section)")}
          </ul>
        </div>
        <rv-scrollbar></rv-scrollbar>
      </div>
      <div class="foot"><rv-scrollbar horizontal></rv-scrollbar></div>
    `;
  }
}
customElements.define("rv-browser", RvBrowser);

/* ---------- drawing area ---------- */

class RvModel extends RvElement {
  getStyles() {
    return `
      :host { display: block; width: 390px; height: 340px; }
      svg { display: block; width: 100%; height: 100%; }
    `;
  }

  getMarkup() {
    // one storey of openings, repeated down the facade
    const pair = `
      <path d="M518 540l36-18v62l-36 14zM566 512l40-20v66l-40 16z" fill="#15181c"/>
      <path d="M524 546l24-12v44l-24 10zM572 518l24-12v46l-24 10z" fill="#aeb9c4"/>
      <path d="M524 576l8-20 6 8 10-20v34l-24 10zM572 550l10-24 6 12 8-4v18l-24 10z" fill="#333c48"/>
      <path d="M555 524v58M603 494v62" stroke="#b7a07c" stroke-width="3"/>`;
    const side = `
      <path d="M727 478l14-6 24 12v12l-26-6-8 8z" fill="#39464f"/>
      <path d="M740 490l24 6v40l-24-12z" fill="#142430"/>
      <path d="M750 498l8 2v30l-8-4z" fill="#58a5cf"/>`;
    const bay = `
      <path d="M312 528q40 4 92 16v34q-50-14-92-50z" fill="#122a38"/>
      <path d="M350 543l18 2v14zM374 546l12 2v20l-12-6zM390 550l10 2v20l-10-5z" fill="#9ad4e6"/>`;
    const balcony = (deck) => `
      <path d="M165 475l45 6 265 130-35 22q-130-22-190-60-60-45-70-80z" fill="${deck}" stroke="#000"/>
      <path d="M125 463l42-25 4 38 12 20q30 84 140 110l114 27 40-22v28l-40 20-107-18Q190 590 174 506l-52-18z" fill="#050505"/>
      <path d="M119 484l53 26q20 76 138 124l120 30 45-24v16l-45 24-120-54Q190 590 170 522l-51-24z" fill="#a85c68" stroke="#111" stroke-width="2"/>
      <path d="M119 484l53 24q20 86 148 122l110 26v-12l-100-22q-130-36-148-120l-60-10z" fill="#050505"/>
      <path d="M314 588l34 10v38l-34-10z" fill="#1d5680" opacity=".85"/>
      <path d="M350 604l54 16v16l-54-14z" fill="#123449"/>
      <path d="M356 606v16M368 610v14M384 614v16M240 606v14M262 614v14M284 620v14" stroke="#6c7d88" stroke-width="3"/>
      <path d="M330 632l74 16" stroke="#8e6a72" stroke-width="4"/>`;
    return `
      <svg viewBox="0 0 1170 1020" stroke-linejoin="round" role="img" aria-label="Residence model">
        <defs>
          <pattern id="mesh" width="8" height="8" patternUnits="userSpaceOnUse">
            <path d="M0 0h8v8H0z" fill="#0a1013"/><path d="M0 0h3v3H0zM4 4h3v3H4z" fill="#33444c"/>
          </pattern>
        </defs>

        <!-- compound wall -->
        <g stroke="#111" stroke-width="3">
          <path d="M42 715L172 645v55L108 740z" fill="#704850"/>
          <path d="M975 540l75-43 65 33-140 80z" fill="#a85c68"/>
          <path d="M975 562l25-12 32 15-57 40z" fill="#fff"/>
          <path d="M108 740l68-40 304 155 300-115-343 190z" fill="#fff" stroke="none"/>
          <path d="M42 715L437 940v57L42 768z" fill="#a25964"/>
          <path d="M437 940l331-190 207-138 140-82v70L437 997z" fill="#61414a"/>
          <path d="M42 715l18 0 377 216 335-188 0 10-335 187z" fill="#a85c68" stroke-width="2"/>
        </g>

        <!-- rear balconies -->
        <g>
          <path d="M975 340l77 38v36l-77 46z" fill="#060606"/>
          <path d="M975 378l42 26-42 28z" fill="#e3e3e3"/>
          <path d="M975 448l77 38v36l-77 46z" fill="#060606"/>
          <path d="M975 486l42 26-42 28z" fill="#e3e3e3"/>
        </g>

        <!-- body -->
        <g stroke="#1a1012" stroke-width="3">
          <path d="M175 400l305 130v330q-130-56-200-106-90-50-108-110z" fill="#a85c68"/>
          <path d="M475 520l210-110v350l-205 100z" fill="#66424a"/>
          <path d="M685 385l83 50v312l-83 30z" fill="#a85c68"/>
          <path d="M768 435l207-110v285l-207 138z" fill="#64404a"/>
          <path d="M480 640l205-110M768 470l207-125" fill="none"/>
          <path d="M480 650l205-106 83 40 207-125M480 752l205-112 83 42 207-125M685 530l83 42" fill="none" stroke-width="4"/>
          <path d="M480 535v325M768 455v290" fill="none"/>
        </g>

        <g>${bay}<g transform="translate(0 110)">${bay}</g><g transform="translate(0 218)">${bay}</g></g>
        ${balcony("#e2e2e2")}
        <g transform="translate(0 108)">${balcony("#6c757c")}</g>

        <!-- parapet and terrace -->
        <g stroke="#1a1012" stroke-width="3">
          <path d="M120 350l245-140 65 33v-73L655 42l140 80q90-8 110 40l3 28 142 78v37L768 462l-83-44-248 142-312-165z" fill="#66424a"/>
          <path d="M655 50l140 78v36L655 85zM430 176l80 34v32l-80-36zM365 216l65 34v36l-65-28zM905 192l138 78-38 22-105-64z" fill="#ad5f6b"/>
          <path d="M795 126q92-6 108 48v52q-10-52-108-64z" fill="#ad5f6b"/>
          <path d="M178 365l187-105 65 26 80-46v-30l-30-25L655 85l140 80q85 0 105 60l105 67-215 117-50-28-62 0-241 138-52-16Q190 490 178 365z" fill="#e6e6e6"/>
          <path d="M120 350l56 26q10 100 130 116l80 6 51 26v36l-52-26q-190 0-208-120l-57-31z" fill="#a85c68"/>
          <path d="M437 524l248-138 83 50 282-166v35L768 462l-83-44-248 142z" fill="#66424a"/>
          <path d="M685 386l83 50v26l-83-44z" fill="#a85c68"/>
          <path d="M430 250l80-40v30l-80 48z" fill="#704850"/>
        </g>
        <g fill="none" stroke="#8e4f5a" stroke-width="5">
          <path d="M124 350l241-136 65 34M434 172L655 46l140 79q90-6 109 42l1 26 142 78-279 162-83-48-248 140"/>
        </g>

        <!-- wall lines on the terrace -->
        <g fill="none" stroke="#151515" stroke-width="4">
          <path d="M178 360l262 150M186 354l262 150" stroke-width="2"/>
          <path d="M628 95l274 155-158 92M636 90l258 150" stroke-width="3"/>
          <path d="M300 290l104 56-118 70M365 320l60-32M570 135l50 28M704 145l-70 40 66 40M776 190l-90 50M576 250l80-48 40 20M510 250l46-16 24 16M856 280l84 48M720 405l28-22 46 28"/>
        </g>

        <!-- stair tower -->
        <g stroke="#1a1012" stroke-width="3">
          <path d="M540 308l103 55v48l-103-38z" fill="#a85c68"/>
          <path d="M643 363l99-55v66l-60 12-39 25z" fill="#66424a"/>
          <path d="M525 295l115-70 120 70-115 62z" fill="#6d767e"/>
          <path d="M640 225l120 70-94-20z" fill="#4b5158"/>
          <path d="M525 295l141-20-21 82z" fill="#76818b"/>
          <path d="M525 295l115-70 26 50z" fill="#5f6971"/>
          <path d="M525 295v12l120 62 115-62v-12l-115 62z" fill="#59626b"/>
          <path d="M640 372l24-12v30l-24 20z" fill="#4d6374" stroke="none"/>
        </g>

        <!-- openings -->
        <g>${pair}<g transform="translate(0 116)">${pair}</g><g transform="translate(0 216)">${pair}</g></g>
        <path d="M518 642l90-46 10 6-100 50z" fill="#526068"/>
        <g>${side}<g transform="translate(0 110)">${side}</g></g>

        <!-- porch canopy -->
        <path d="M632 800l90-52 46 2-118 70z" fill="#fff"/>
        <path d="M600 790l100-56 66 12-106 62z" fill="#66424a"/>
        <path d="M664 774l36-20 22 8-38 22z" fill="#fff"/>
        <path d="M638 792l26 14M652 784l26 14" stroke="#c08a62" stroke-width="5"/>
        <path d="M646 788l26 14" stroke="#33150c" stroke-width="4"/>
        <path d="M515 752l170-92 80 42-157 106z" fill="url(#mesh)"/>
        <path d="M740 706l26 10v34l-26-12z" fill="#22343f"/>
        <path d="M750 716l10 4v24l-10-4z" fill="#58a5cf"/>

        <!-- glazing seen through the floors -->
        <g fill="#83bfdf" opacity=".5">
          <path d="M644 135l20 10v34l-20-10zM740 196l20 8v34l-20-10zM792 224l24 12v46l-24-12zM876 274l20 10v44l-20-10zM792 336l24 12v46l-24-12zM744 305l16 8v34l-16-8zM452 276l20 10v14l-20-6zM450 380l22 14v14l-22-10zM216 410l20 14v26l-20-8zM448 490l14 6v10l-14-6z"/>
          <path d="M640 250l30 10-20 24z" opacity=".6"/>
        </g>
        <g fill="#3f7599" opacity=".4">
          <path d="M794 440l20 12v40l-20-10zM876 404l20-8v56l-20 8zM924 352l16-6v40l-16 6zM876 500l20-8v46l-20 8zM924 464l16-6v50l-16 6zM926 580l16-6v38l-16 6zM212 535l26 14v34l-26-12zM212 640l26 14v40l-26-12zM735 425l33 18v14l-33-16z"/>
        </g>
      </svg>
    `;
  }
}
customElements.define("rv-model", RvModel);

class RvViewCube extends RvElement {
  getStyles() {
    return `
      :host { display: block; width: 96px; height: 60px; }
      svg { display: block; width: 100%; height: 100%; }
      text { font-size: 7px; font-weight: 600; fill: #999; text-anchor: middle; }
    `;
  }

  getMarkup() {
    return `
      <svg viewBox="0 0 96 60" aria-label="View cube">
        <path d="M2 56q4-24 18-30l4 8q-10 8-12 24zM94 56q-4-24-16-30l-4 8q8 8 10 24z" fill="#f0f0f0" stroke="#e0e0e0"/>
        <path d="M22 14L47 3l26 12-25 14z" fill="#f2f2f2" stroke="#aaa"/>
        <path d="M22 14l26 15v30H24z" fill="#e8e8e8" stroke="#aaa"/>
        <path d="M73 15L48 29v30h24z" fill="#e0e0e0" stroke="#aaa"/>
        <text transform="translate(48 18) rotate(25)">TOP</text>
        <text transform="translate(34 40) rotate(28)">FRONT</text>
        <text transform="translate(62 40) rotate(-28)">RIGHT</text>
      </svg>
    `;
  }
}
customElements.define("rv-view-cube", RvViewCube);

class RvCanvas extends RvElement {
  getStyles() {
    return `
      :host { position: relative; display: flex; justify-content: flex-end; min-height: 0; border-top: 1px solid #666; border-left: 1px solid #999; background: #fff; }
      rv-model { position: absolute; left: 537px; top: 63px; }
      rv-view-cube { position: absolute; right: 35px; top: 62px; }
      .doc { display: flex; align-self: flex-start; gap: 1px; padding: 6px 2px; }
      .doc button { width: 16px; height: 16px; --icon: 13px; }
      rv-scrollbar { width: 17px; }
      rv-palette { position: absolute; }
      .properties { left: 2px; top: 7px; width: 219px; height: 403px; }
      .browser { right: 0; top: 110px; width: 219px; height: 401px; --edge: 1px; }
    `;
  }

  getMarkup() {
    return `
      <rv-model></rv-model>
      <rv-view-cube></rv-view-cube>
      <div class="doc">
        <button aria-label="Minimize view"><rv-icon name="docMin"></rv-icon></button>
        <button aria-label="Restore view"><rv-icon name="docRestore"></rv-icon></button>
        <button aria-label="Close view"><rv-icon name="closebox"></rv-icon></button>
      </div>
      <rv-scrollbar plain></rv-scrollbar>
      <rv-palette class="properties" label="Properties"><rv-properties></rv-properties></rv-palette>
      <rv-palette class="browser" label="Project Browser - Residence"><rv-browser></rv-browser></rv-palette>
    `;
  }
}
customElements.define("rv-canvas", RvCanvas);

/* ---------- bottom bars ---------- */

class RvViewBar extends RvElement {
  getStyles() {
    return `
      :host { position: relative; display: flex; align-items: center; height: 18px; padding-left: 11px; background: #ebebeb; border-left: 1px solid #999; }
      .scale { width: 63px; text-align: left; white-space: nowrap; }
      .tools { display: flex; justify-content: space-between; width: 250px; }
      .tools button { display: flex; align-items: center; justify-content: center; width: 16px; height: 16px; --icon: 14px; }
      .track { flex: 1; display: flex; justify-content: center; padding-right: 8px; }
      .thumb { width: 14px; height: 14px; border: 1px solid #999; border-radius: 1px; background: linear-gradient(#f6f6f6, #d0d0d0); }
      .end { width: 28px; }
      .end .caret { transform: rotate(-90deg); }
      .pointer { position: absolute; left: 125px; top: 1px; width: 14px; height: 20px; }
    `;
  }

  getMarkup() {
    const names = ["detail", "style", "sun", "shadow", "render", "crop", "cropShow", "lock", "glasses", "bulb", "temp", "analytic", "left"];
    return `
      <button class="scale">1/2" = 1'-0"</button>
      <div class="tools">${names.map((n) => `<button aria-label="${n}"><rv-icon name="${n}"></rv-icon></button>`).join("")}</div>
      <div class="track"><span class="thumb"></span></div>
      <span class="end"><span class="caret"></span></span>
      <svg class="pointer" viewBox="0 0 14 20"><path d="M1 1v14l3-3 3 7 3-1-3-7h5z" fill="#fff" stroke="#444"/></svg>
    `;
  }
}
customElements.define("rv-view-bar", RvViewBar);

class RvStatusBar extends RvElement {
  getStyles() {
    return `
      :host { display: flex; align-items: center; height: 24px; padding-left: 2px; border-top: 1px solid #999; background: linear-gradient(#dedede, #c8c8c8); color: #222; white-space: nowrap; }
      .hint { flex: 0 1 396px; }
      .combo { display: grid; align-items: center; }
      .combo > * { grid-area: 1 / 1; }
      .combo .caret { justify-self: end; margin-right: 3px; opacity: .5; }
      select { appearance: none; width: 100%; height: 19px; padding: 0 2px; border: 1px solid #ddd; background: #fff; color: #8c8c8c; }
      .workset { width: 192px; margin: 0 7px; }
      .option { width: 144px; margin-left: 7px; }
      .group { display: flex; align-items: center; gap: 4px; }
      .pair { gap: 8px; margin-left: 20px; }
      .select { gap: 8px; margin-left: auto; padding-right: 61px; }
      .select .group { gap: 0; }
      button { display: flex; }
    `;
  }

  getMarkup() {
    const tool = (name, label) => `<button aria-label="${label}"><rv-icon name="${name}"></rv-icon></button>`;
    return `
      <span class="hint">Click to select, TAB for alternates, CTRL adds, SHIFT unselects.</span>
      ${tool("workset", "Worksets")}
      <div class="combo workset"><select aria-label="Active workset"><option></option></select><span class="caret"></span></div>
      <div class="group">${tool("filterGray", "Editing requests")}<span>:0</span></div>
      <div class="group pair">${tool("options", "Design options")}${tool("optionAdd", "Add to set")}</div>
      <div class="combo option"><select aria-label="Design option"><option>Main Model</option></select><span class="caret"></span></div>
      <div class="group select">
        ${tool("selLink", "Select links")}${tool("selUnder", "Select underlay")}${tool("selPin", "Select pinned")}
        ${tool("selFace", "Select by face")}${tool("drag", "Drag on selection")}
        <div class="group">${tool("filter", "Filter")}<span>:0</span></div>
      </div>
    `;
  }
}
customElements.define("rv-status-bar", RvStatusBar);

class RvApp extends RvElement {
  getStyles() {
    return `
      :host {
        display: grid;
        grid-template-rows: auto auto 26px 1fr auto auto;
        grid-template-columns: minmax(0, 1fr);
        height: 100vh;
        padding: 0 1px 0 2px;
        overflow: hidden;
      }
      .options { background: linear-gradient(#e9e9e9, #dfdfdf); }
    `;
  }

  getMarkup() {
    return `
      <rv-header></rv-header>
      <rv-ribbon></rv-ribbon>
      <div class="options"></div>
      <rv-canvas></rv-canvas>
      <rv-view-bar></rv-view-bar>
      <rv-status-bar></rv-status-bar>
    `;
  }
}
customElements.define("rv-app", RvApp);
</script>
</body>
</html>
